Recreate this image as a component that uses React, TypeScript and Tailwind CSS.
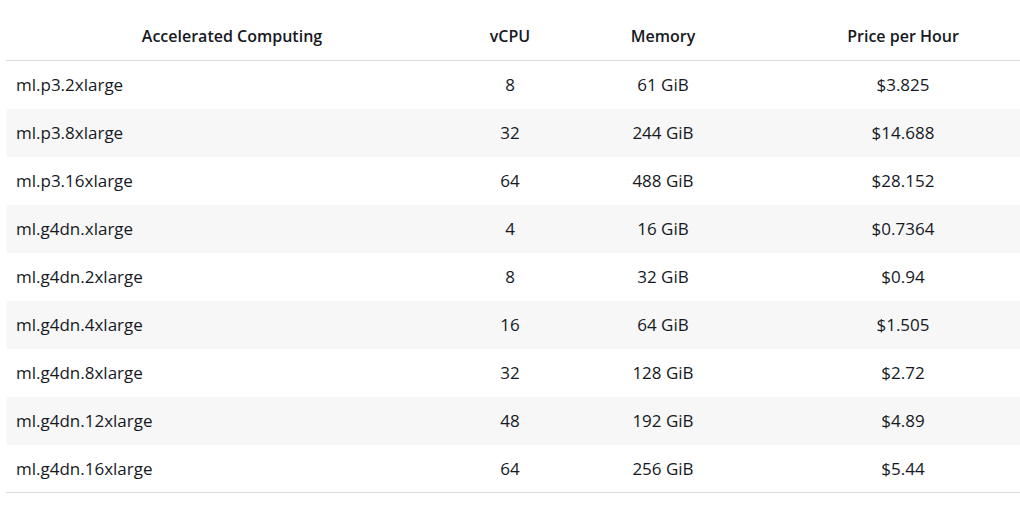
import React from 'react'

const rows = [
  ['ml.p3.2xlarge', '8', '61 GiB', '$3.825'],
  ['ml.p3.8xlarge', '32', '244 GiB', '$14.688'],
  ['ml.p3.16xlarge', '64', '488 GiB', '$28.152'],
  ['ml.g4dn.xlarge', '4', '16 GiB', '$0.7364'],
  ['ml.g4dn.2xlarge', '8', '32 GiB', '$0.94'],
  ['ml.g4dn.4xlarge', '16', '64 GiB', '$1.505'],
  ['ml.g4dn.8xlarge', '32', '128 GiB', '$2.72'],
  ['ml.g4dn.12xlarge', '48', '192 GiB', '$4.89'],
  ['ml.g4dn.16xlarge', '64', '256 GiB', '$5.44'],
]

const cols = 'grid grid-cols-[452px_104px_202px_278px]'

export default function App() {
  return (
    <div className="h-[506px] w-[1020px] overflow-hidden bg-white pl-[6px] text-[#16191f] [font-family:'Open_Sans',sans-serif]">
      <div className="w-[1036px]">
        <div className={`${cols} h-[61px] border-b border-[#d5dbdb] pt-[12px] text-[16px] font-semibold`}>
          <div className="flex items-center justify-center">Accelerated Computing</div>
          <div className="flex items-center justify-center">vCPU</div>
          <div className="flex items-center justify-center">Memory</div>
          <div className="flex items-center justify-center">Price per Hour</div>
        </div>
        {rows.map((r, i) => (
          <div
            key={r[0]}
            className={`${cols} h-[48px] items-center text-[17px] ${i % 2 === 1 ? 'bg-[#f7f7f7]' : 'bg-white'} ${i === rows.length - 1 ? 'border-b border-[#d5dbdb]' : ''}`}
          >
            <div className="pl-[10px]">{r[0]}</div>
            <div className="text-center">{r[1]}</div>
            <div className="text-center">{r[2]}</div>
            <div className="text-center">{r[3]}</div>
          </div>
        ))}
      </div>
    </div>
  )
}
